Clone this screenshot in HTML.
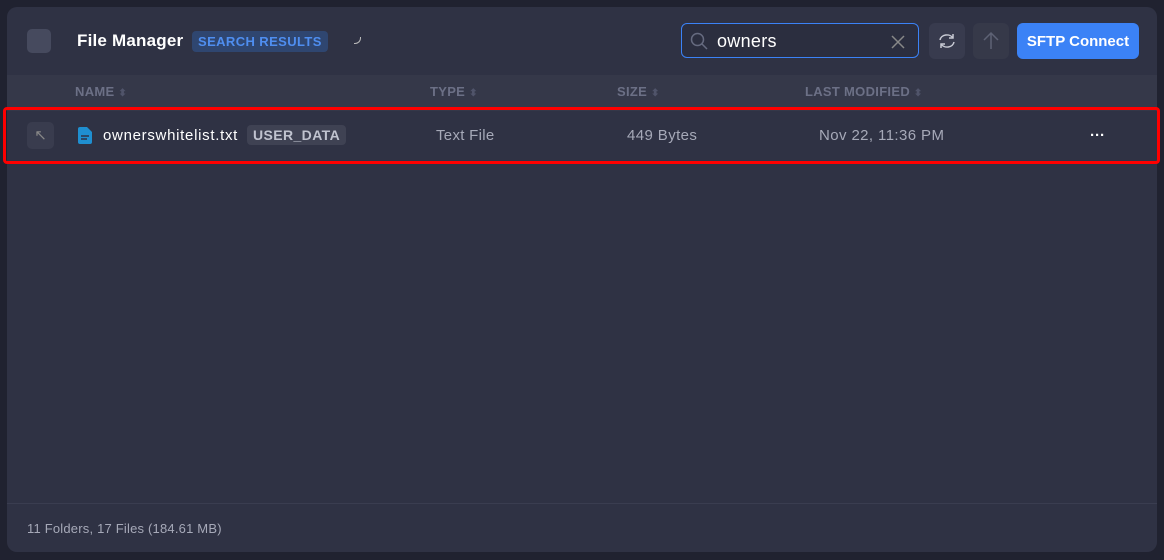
<!DOCTYPE html><html><head><style>
body{margin:0;width:1164px;height:560px;background:#202230;font-family:"Liberation Sans",sans-serif;overflow:hidden;position:relative}
.p{position:absolute;left:7px;top:7px;width:1150px;height:545px;background:#2f3244;border-radius:10px;overflow:hidden}
.a{position:absolute}
.th{position:absolute;top:77px;font-size:13px;font-weight:bold;color:#6c7086;letter-spacing:0.3px}
.th span{color:#50546a;font-size:10px}
</style></head><body>
<div class="p">
<div class="a" style="left:20px;top:22px;width:24px;height:24px;background:#464a5e;border-radius:5px"></div>
<div class="a" style="left:70px;top:24px;font-size:17px;font-weight:bold;color:#fff;letter-spacing:0.2px">File Manager</div>
<div class="a" style="left:185px;top:24px;padding:3px 6px;background:#2f4670;border-radius:4px;color:#4f8ef0;font-size:13px;font-weight:bold;letter-spacing:0.4px">SEARCH RESULTS</div>
<div class="a" style="left:347px;top:30px;width:6px;height:6px;border-right:1.5px solid #bbb;border-bottom:1.5px solid #bbb;border-radius:0 0 6px 0"></div>
<div class="a" style="left:674px;top:16px;width:236px;height:33px;border:1.5px solid #3b82f6;border-radius:6px;background:#2b2e3f"></div>
<svg class="a" style="left:683px;top:25px" width="18" height="18"><circle cx="7.5" cy="7.5" r="6" fill="none" stroke="#666b80" stroke-width="1.5"/><path d="M12 12l5 5" stroke="#666b80" stroke-width="1.5"/></svg>
<div class="a" style="left:710px;top:24px;font-size:18px;color:#fff;letter-spacing:0.3px">owners</div>
<svg class="a" style="left:884px;top:28px" width="14" height="14"><path d="M1 1l12 12M13 1L1 13" stroke="#888" stroke-width="1.5"/></svg>
<div class="a" style="left:922px;top:16px;width:36px;height:36px;background:#383b4e;border-radius:6px"></div>
<svg class="a" style="left:930px;top:24px" width="20" height="20"><path d="M3 9a7 6 0 0 1 13-2M17 11a7 6 0 0 1-13 2" fill="none" stroke="#c8cad4" stroke-width="1.5"/><path d="M16 3v4h-4M4 17v-4h4" fill="none" stroke="#c8cad4" stroke-width="1.5"/></svg>
<div class="a" style="left:966px;top:16px;width:36px;height:36px;background:#363949;border-radius:6px"></div>
<svg class="a" style="left:975px;top:24px" width="18" height="20"><path d="M9 18V2M2 9l7-7 7 7" fill="none" stroke="#5e6275" stroke-width="1.5"/></svg>
<div class="a" style="left:1010px;top:16px;width:122px;height:36px;background:#3b82f6;border-radius:6px;color:#fff;font-weight:bold;font-size:15px;line-height:37px;text-align:center">SFTP Connect</div>
<div class="a" style="left:0;top:68px;width:1150px;height:36px;background:#353849"></div>
<div class="th" style="left:68px">NAME <span>⬍</span></div><div class="th" style="left:423px">TYPE <span>⬍</span></div><div class="th" style="left:610px">SIZE <span>⬍</span></div><div class="th" style="left:798px">LAST MODIFIED <span>⬍</span></div>
<div class="a" style="left:20px;top:115px;width:27px;height:27px;background:#393c4e;border-radius:5px;color:#888;font-size:15px;text-align:center;line-height:27px">↖</div>
<svg class="a" style="left:71px;top:120px" width="14" height="17"><path d="M0 2a2 2 0 0 1 2-2h7l5 5v10a2 2 0 0 1-2 2H2a2 2 0 0 1-2-2z" fill="#1f8fd0"/><path d="M3 9h8M3 12h6" stroke="#2f3244" stroke-width="1.5"/></svg>
<div class="a" style="left:96px;top:120px;font-size:15px;color:#fff;letter-spacing:0.7px">ownerswhitelist.txt</div>
<div class="a" style="left:240px;top:118px;padding:2px 6px;background:#3f4253;border-radius:4px;font-size:14px;font-weight:bold;color:#c0c3cf;letter-spacing:0.4px">USER_DATA</div>
<div class="a" style="left:429px;top:120px;font-size:15px;color:#a6a9b8;letter-spacing:0.3px">Text File</div>
<div class="a" style="left:620px;top:120px;font-size:15px;color:#a6a9b8;letter-spacing:0.4px">449 Bytes</div>
<div class="a" style="left:812px;top:120px;font-size:15px;color:#a6a9b8;letter-spacing:0.4px">Nov 22, 11:36 PM</div>
<div class="a" style="left:1083px;top:120px;font-size:15px;color:#fff;font-weight:bold">···</div>
<div class="a" style="left:0;top:496px;width:1150px;height:1px;background:#3a3d50"></div>
<div class="a" style="left:20px;top:514px;font-size:13px;color:#a6a9b8;letter-spacing:0.2px">11 Folders, 17 Files (184.61 MB)</div>
</div>
<div class="a" style="left:3px;top:107px;width:1151px;height:51px;border:3px solid #f00;border-radius:4px"></div>
</body></html>
